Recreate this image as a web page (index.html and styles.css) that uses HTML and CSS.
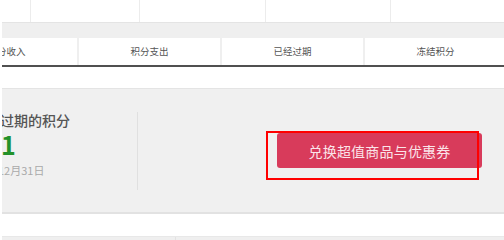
FILE: index.html
```html
<!DOCTYPE html>
<html lang="zh-CN">
<head>
    <meta charset="UTF-8">
    <meta name="viewport" content="width=device-width, initial-scale=1.0">
    <title>我的积分</title>
    <link rel="stylesheet" href="styles.css">
</head>
<body>

<div class="page">
    <div class="top-row">
        <div class="cell c1"></div>
        <div class="cell c2"></div>
        <div class="cell c3"></div>
        <div class="cell c4"></div>
        <div class="cell c5"></div>
    </div>
    <div class="band"></div>

    <div class="tabs">
        <div class="tab">积分收入</div>
        <div class="tab">积分支出</div>
        <div class="tab">已经过期</div>
        <div class="tab">冻结积分</div>
    </div>

    <div class="panel">
        <div class="expire">
            <div class="expire-title">过期的积分</div>
            <div class="expire-num">1</div>
            <div class="expire-date">12月31日</div>
        </div>
        <div class="action">
            <div class="btn-wrap">
                <button class="btn-exchange">兑换超值商品与优惠券</button>
                <div class="mark"></div>
            </div>
        </div>
    </div>

    <div class="next-row">
        <div class="next-cell first"></div>
        <div class="next-cell"></div>
    </div>
</div>

</body>
</html>
```

FILE: styles.css
```css
body {
    margin: 0;
    padding: 0 0 0 2px;
    background-color: #fff;
    font-family: "Noto Sans CJK SC", "Noto Sans", sans-serif;
    overflow: hidden;
}
.page {
    width: 502px;
    overflow: hidden;
}
.top-row {
    display: flex;
    height: 22px;
}
.top-row .cell {
    box-sizing: border-box;
    border-right: 1px solid #ececec;
}
.c1 { width: 29px; }
.c2 { width: 109px; }
.c3 { width: 126px; }
.c4 { width: 125px; }
.c5 { flex: 1; border-right: none !important; }
.band {
    height: 15px;
    background-color: #efefef;
    border-top: 1px solid #e4e4e4;
}
.tabs {
    display: flex;
    margin-left: -66px;
    border-bottom: 2px solid #505050;
    width: 640px;
}
.tab {
    box-sizing: border-box;
    width: 143px;
    flex: none;
    height: 27px;
    line-height: 27px;
    text-align: center;
    font-size: 9.5px;
    color: #555;
    border-right: 2px solid #efefef;
}
.panel {
    display: flex;
    margin-top: 21px;
    height: 123px;
    background-color: #f0f0f0;
    border-top: 1px solid #e4e4e4;
    border-bottom: 2px solid #e2e2e2;
}
.expire {
    box-sizing: border-box;
    width: 136px;
    height: 78px;
    margin-top: 23px;
    border-right: 1px solid #e0e0e0;
}
.expire-title {
    margin-left: -2px;
    font-size: 14px;
    line-height: 16px;
    color: #555;
    font-weight: 500;
}
.expire-num {
    margin-top: 4px;
    margin-left: -1px;
    font-size: 25px;
    line-height: 24px;
    font-weight: bold;
    color: #23922a;
}
.expire-date {
    margin-top: 7px;
    margin-left: -4px;
    font-size: 11px;
    line-height: 14px;
    color: #aaa;
}
.action {
    flex: 1;
    padding: 44px 0 0 139px;
}
.btn-wrap {
    position: relative;
    width: 205px;
}
.btn-exchange {
    display: block;
    width: 205px;
    height: 35px;
    padding: 0;
    border: none;
    border-radius: 3px;
    background-color: #d83b5b;
    color: #fbe4e9;
    font-family: "Noto Sans CJK SC", sans-serif;
    font-size: 14px;
    letter-spacing: 0.2px;
    cursor: pointer;
}
.mark {
    position: absolute;
    left: -11px;
    top: -2px;
    box-sizing: border-box;
    width: 213px;
    height: 49px;
    border: 2px solid #ff0000;
}
.next-row {
    display: flex;
    margin-top: 22px;
    height: 10px;
    background-color: #efefef;
    border-top: 1px solid #e8e8e8;
}
.next-cell {
    flex: 1;
}
.next-cell.first {
    flex: none;
    width: 173px;
    border-right: 1px solid #e2e2e2;
}
```
